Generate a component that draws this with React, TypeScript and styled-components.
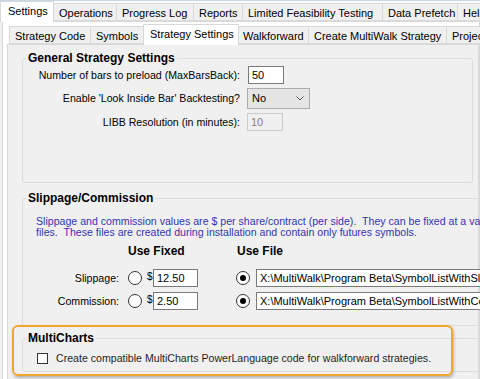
import React from "react";
import styled, { createGlobalStyle } from "styled-components";

const Global = createGlobalStyle`
  html, body { margin: 0; padding: 0; background: #f0f0f0; }
  body { font-family: "Liberation Sans", Arial, sans-serif; font-size: 11px; color: #000; }
  * { box-sizing: border-box; }
`;

const Window = styled.div`
  position: relative;
  width: 480px;
  height: 379px;
  overflow: hidden;
  background: #f0f0f0;
  border-top: 1px solid #c6d6ea;
`;

const OuterStrip = styled.div`
  display: flex;
  align-items: flex-end;
  height: 20px;
  padding-left: 1px;
  background: #fff;
  position: relative;
  z-index: 2;
`;

const InnerStrip = styled.div`
  display: flex;
  align-items: flex-end;
  height: 22px;
  padding-left: 3px;
  background: #fff;
  position: relative;
  z-index: 2;
`;

const Tab = styled.div<{ $w: number; $active?: boolean; $h: number; $pad?: number }>`
  flex: none;
  width: ${(p) => p.$w}px;
  height: ${(p) => (p.$active ? p.$h + 3 : p.$h)}px;
  margin-bottom: ${(p) => (p.$active ? -1 : 0)}px;
  padding-left: ${(p) => p.$pad ?? 5}px;
  border: 1px solid #d9d9d9;
  border-bottom: ${(p) => (p.$active ? "none" : "1px solid #d9d9d9")};
  margin-left: -1px;
  background: ${(p) => (p.$active ? "#fff" : "#f0f0f0")};
  display: flex;
  align-items: center;
  padding-top: ${(p) => (p.$active ? 0 : 1)}px;
  padding-bottom: ${(p) => (p.$active ? 2 : 0)}px;
  white-space: nowrap;
  overflow: hidden;
  font-size: 11px;
  color: #000;
  position: relative;
  z-index: ${(p) => (p.$active ? 3 : 1)};
`;

const OuterPage = styled.div`
  margin-left: 2px;
  border: 1px solid #d9d9d9;
  background: #fff;
  padding-left: 4px;
  height: 400px;
`;

const InnerPage = styled.div`
  border: 1px solid #d9d9d9;
  background: #f0f0f0;
  padding: 7px 0 0 14px;
  height: 380px;
  font-size: 10.6px;
`;

const Group = styled.fieldset<{ $w: number; $mt: number }>`
  margin: ${(p) => p.$mt}px 0 0 0;
  padding: 0;
  width: ${(p) => p.$w}px;
  min-width: 0;
  border: 1px solid #dcdcdc;
  border-radius: 3px;
`;

const Legend = styled.legend`
  margin-left: 3px;
  padding: 0 2px;
  font-weight: bold;
  font-size: 12px;
  line-height: 12px;
  color: #000;
`;

const FormGrid = styled.div`
  display: grid;
  grid-template-columns: 217px auto;
  grid-template-rows: 22px 24px 24px;
  column-gap: 7px;
  align-items: center;
  padding-bottom: 48px;
`;

const Label = styled.div`
  text-align: right;
  white-space: nowrap;
  color: #000;
`;

const TextBox = styled.div<{ $w: number; $disabled?: boolean; $ml?: number }>`
  width: ${(p) => p.$w}px;
  height: 18px;
  margin-left: ${(p) => p.$ml ?? 0}px;
  border: 1px solid ${(p) => (p.$disabled ? "#cccccc" : "#7a7a7a")};
  background: ${(p) => (p.$disabled ? "#f0f0f0" : "#fff")};
  color: ${(p) => (p.$disabled ? "#838383" : "#000")};
  padding-left: 3px;
  display: flex;
  align-items: center;
  white-space: nowrap;
  overflow: hidden;
  font-size: 11px;
`;

const Select = styled.div`
  width: 63px;
  height: 21px;
  border: 1px solid #adadad;
  background: #e5e5e5;
  display: flex;
  align-items: center;
  justify-content: space-between;
  padding: 0 5px 0 4px;
  font-size: 11px;
`;

const Note = styled.div`
  margin: 12px 0 0 13px;
  color: #3434b2;
  line-height: 11px;
  white-space: nowrap;
`;

const RowsGrid = styled.div`
  display: grid;
  grid-template-columns: 96px 28px 6px 45px 58px 260px;
  grid-auto-rows: 23px;
  align-items: center;
`;

const HeaderGrid = styled(RowsGrid)`
  grid-auto-rows: 14px;
  margin: 6px 0 8px;
`;

const ColHead = styled.div<{ $col: string; $pl: number }>`
  grid-column: ${(p) => p.$col};
  padding-left: ${(p) => p.$pl}px;
  font-weight: bold;
  font-size: 12px;
  white-space: nowrap;
`;

const RadioCell = styled.div<{ $pl: number }>`
  padding-left: ${(p) => p.$pl}px;
  display: flex;
  align-items: center;
`;

const Radio = styled.span<{ $checked?: boolean }>`
  width: 14px;
  height: 14px;
  border-radius: 50%;
  border: 1px solid #333;
  background: #fff;
  display: flex;
  align-items: center;
  justify-content: center;
  &::after {
    content: "";
    width: 6px;
    height: 6px;
    border-radius: 50%;
    background: ${(p) => (p.$checked ? "#000" : "transparent")};
  }
`;

const Dollar = styled.div`
  font-size: 10px;
  margin-top: -3px;
`;

const Spacer = styled.div`
  height: 13px;
`;

const CheckRow = styled.div`
  display: flex;
  align-items: center;
  gap: 8px;
  padding: 8px 0 7px 14px;
  white-space: nowrap;
  color: #1e1e1e;
`;

const CheckBox = styled.span`
  width: 11px;
  height: 11px;
  border: 1px solid #333;
  background: #fff;
`;

const Highlight = styled.div`
  position: absolute;
  left: 12px;
  top: 324px;
  width: 441px;
  height: 51px;
  border: 2px solid #f2a52c;
  border-radius: 6px;
  box-shadow: 1px 2px 3px rgba(0, 0, 0, 0.25);
  pointer-events: none;
  z-index: 5;
`;

const outerTabs = [
  { t: "Settings", w: 54, active: true, pad: 7 },
  { t: "Operations", w: 64 },
  { t: "Progress Log", w: 78 },
  { t: "Reports", w: 50 },
  { t: "Limited Feasibility Testing", w: 141 },
  { t: "Data Prefetch", w: 76 },
  { t: "Help", w: 40 },
];

const innerTabs = [
  { t: "Strategy Code", w: 82 },
  { t: "Symbols", w: 54 },
  { t: "Strategy Settings", w: 96, active: true, pad: 6 },
  { t: "Walkforward", w: 71, pad: 4 },
  { t: "Create MultiWalk Strategy", w: 139 },
  { t: "Projects", w: 60 },
];

const Chevron = () => (
  <svg width="8" height="5" viewBox="0 0 8 5">
    <path d="M0.5 0.5 L4 4 L7.5 0.5" fill="none" stroke="#555" strokeWidth="1" />
  </svg>
);

export default function App() {
  return (
    <>
      <Global />
      <Window>
        <OuterStrip>
          {outerTabs.map((x) => (
            <Tab key={x.t} $w={x.w} $h={18} $active={x.active} $pad={x.pad}>
              {x.t}
            </Tab>
          ))}
        </OuterStrip>
        <OuterPage>
          <InnerStrip>
            {innerTabs.map((x) => (
              <Tab key={x.t} $w={x.w} $h={18} $active={x.active} $pad={x.pad}>
                {x.t}
              </Tab>
            ))}
          </InnerStrip>
          <InnerPage>
            <Group $w={451} $mt={0}>
              <Legend>General Strategy Settings</Legend>
              <FormGrid>
                <Label>Number of bars to preload (MaxBarsBack):</Label>
                <TextBox $w={36} $ml={1}>50</TextBox>
                <Label>Enable 'Look Inside Bar' Backtesting?</Label>
                <Select>
                  <span>No</span>
                  <Chevron />
                </Select>
                <Label>LIBB Resolution (in minutes):</Label>
                <TextBox $w={36} $disabled>10</TextBox>
              </FormGrid>
            </Group>

            <Group $w={480} $mt={9}>
              <Legend>Slippage/Commission</Legend>
              <Note>
                Slippage and commission values are $ per share/contract (per side).&nbsp; They can be fixed at a value or come from
                <br />
                files.&nbsp; These files are created during installation and contain only futures symbols.
              </Note>
              <HeaderGrid>
                <ColHead $col="2 / 5" $pl={9}>Use Fixed</ColHead>
                <ColHead $col="5 / 7" $pl={39}>Use File</ColHead>
              </HeaderGrid>
              <RowsGrid>
                <Label>Slippage:</Label>
                <RadioCell $pl={9}><Radio /></RadioCell>
                <Dollar>$</Dollar>
                <TextBox $w={45}>12.50</TextBox>
                <RadioCell $pl={38}><Radio $checked /></RadioCell>
                <TextBox $w={260}>X:\MultiWalk\Program Beta\SymbolListWithSlippage.txt</TextBox>

                <Label>Commission:</Label>
                <RadioCell $pl={9}><Radio /></RadioCell>
                <Dollar>$</Dollar>
                <TextBox $w={45}>2.50</TextBox>
                <RadioCell $pl={38}><Radio $checked /></RadioCell>
                <TextBox $w={260}>X:\MultiWalk\Program Beta\SymbolListWithCommission.txt</TextBox>
              </RowsGrid>
              <Spacer />
            </Group>

            <Group $w={480} $mt={6}>
              <Legend>MultiCharts</Legend>
              <CheckRow>
                <CheckBox />
                <span>Create compatible MultiCharts PowerLanguage code for walkforward strategies.</span>
              </CheckRow>
            </Group>
          </InnerPage>
        </OuterPage>
        <Highlight />
      </Window>
    </>
  );
}
